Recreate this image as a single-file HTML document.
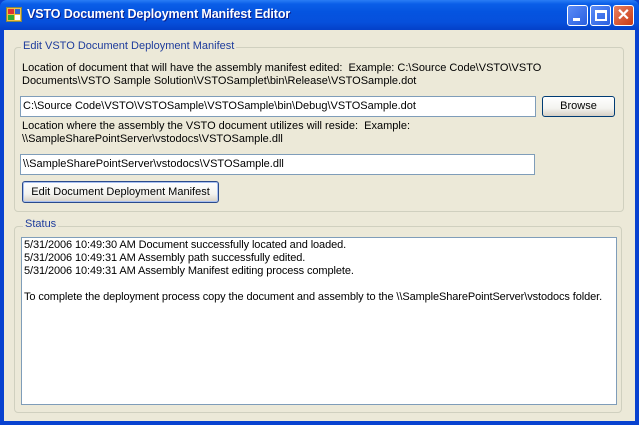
<!DOCTYPE html>
<html><head><style>
*{margin:0;padding:0;box-sizing:border-box}
body{width:639px;height:425px;overflow:hidden;background:#0842d0;font-family:Tahoma,"Liberation Sans",sans-serif;font-size:11px;color:#000;position:relative}
.a{position:absolute}
#title{left:0;top:0;width:639px;height:30px;background:linear-gradient(#2a7df5 0,#0a5ee8 4px,#0554e0 12px,#0650dc 22px,#0440c8 30px);border-radius:7px 7px 0 0}
#ttext{left:27px;top:7px;color:#fff;font-weight:bold;font-size:12.5px;text-shadow:1px 1px #0a1e8c;white-space:nowrap;letter-spacing:-0.1px}
#client{left:4px;top:30px;width:631px;height:391px;background:#ece9d8}
.grp{border:1px solid #d0d0bf;border-radius:4px}
.lbl{color:#1e3c9c;background:#ece9d8;padding:0 2px;white-space:nowrap}
.tb{background:#fff;border:1px solid #7f9db9;padding:3px 2px;white-space:nowrap;overflow:hidden}
.btn{border:1px solid #003c74;border-radius:3px;background:linear-gradient(#fff,#f3f3ef 60%,#d6d0c5);text-align:center;white-space:nowrap}
.t{white-space:nowrap;line-height:13px}
.cb{top:5px;width:21px;height:21px;border:1px solid #fff;border-radius:3px;background:linear-gradient(135deg,#5b8cf7,#2a5fe0)}
</style></head><body>
<div class="a" id="title"></div>
<div class="a" style="left:6px;top:7px;width:16px;height:15px;background:#f0c040;border:1px solid #884;">
<div class="a" style="left:1px;top:1px;width:6px;height:5px;background:#d33"></div>
<div class="a" style="left:8px;top:1px;width:5px;height:5px;background:#36c"></div>
<div class="a" style="left:1px;top:7px;width:6px;height:5px;background:#3a3"></div>
<div class="a" style="left:8px;top:7px;width:5px;height:5px;background:#fff"></div></div>
<div class="a" id="ttext">VSTO Document Deployment Manifest Editor</div>
<div class="a cb" style="left:567px"><div class="a" style="left:5px;top:12px;width:7px;height:3px;background:#fff"></div></div>
<div class="a cb" style="left:590px"><div class="a" style="left:4px;top:4px;width:12px;height:11px;border:2px solid #fff;border-top-width:3px"></div></div>
<div class="a cb" style="left:613px;background:linear-gradient(135deg,#e88060,#c83a14);color:#fff;font:bold 16px 'Liberation Sans',sans-serif;text-align:center;line-height:19px">✕</div>
<div class="a" id="client"></div>
<div class="a grp" style="left:14px;top:47px;width:610px;height:165px"></div>
<div class="a lbl" style="left:21px;top:40px">Edit VSTO Document Deployment Manifest</div>
<div class="a t" style="left:22px;top:62px">Location of document that will have the assembly manifest edited:&nbsp; Example: C:\Source Code\VSTO\VSTO<br>Documents\VSTO Sample Solution\VSTOSamplet\bin\Release\VSTOSample.dot</div>
<div class="a tb" style="left:20px;top:96px;width:516px;height:21px">C:\Source Code\VSTO\VSTOSample\VSTOSample\bin\Debug\VSTOSample.dot</div>
<div class="a btn" style="left:542px;top:96px;width:73px;height:21px;line-height:19px">Browse</div>
<div class="a t" style="left:22px;top:120px">Location where the assembly the VSTO document utilizes will reside:&nbsp; Example:<br>\\SampleSharePointServer\vstodocs\VSTOSample.dll</div>
<div class="a tb" style="left:20px;top:154px;width:515px;height:21px">\\SampleSharePointServer\vstodocs\VSTOSample.dll</div>
<div class="a btn" style="left:22px;top:181px;width:197px;height:22px;line-height:20px;border-color:#2a4a8c;box-shadow:inset 0 0 0 1px #a8c0f0">Edit Document Deployment Manifest</div>
<div class="a grp" style="left:14px;top:226px;width:608px;height:187px"></div>
<div class="a lbl" style="left:23px;top:218px">Status</div>
<div class="a" style="left:21px;top:237px;width:596px;height:168px;background:#fff;border:1px solid #7f9db9"></div>
<div class="a t" style="left:24px;top:239px;letter-spacing:-0.1px">5/31/2006 10:49:30 AM Document successfully located and loaded.<br>5/31/2006 10:49:31 AM Assembly path successfully edited.<br>5/31/2006 10:49:31 AM Assembly Manifest editing process complete.<br><br>To complete the deployment process copy the document and assembly to the \\SampleSharePointServer\vstodocs folder.</div>
</body></html>
